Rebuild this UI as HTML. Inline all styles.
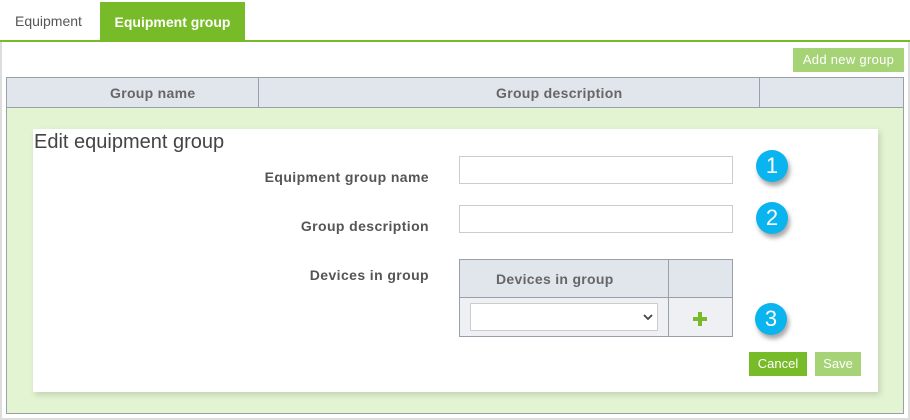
<!DOCTYPE html>
<html><head><style>
*{box-sizing:border-box;margin:0;padding:0}
body{width:910px;height:420px;background:#fff;font-family:"Liberation Sans",sans-serif;position:relative;overflow:hidden;color:#555}
.a{position:absolute}
.lbl{position:absolute;right:481px;font-weight:bold;font-size:14px;letter-spacing:0.4px;color:#555;white-space:nowrap}
.inp{position:absolute;border:1px solid #ccc;background:#fff}
.num{position:absolute;width:32px;height:32px;border-radius:50%;background:#0ab4ee;color:#fff;font-size:22px;text-align:center;line-height:32px;box-shadow:2px 4px 5px rgba(0,0,0,.35)}
.hd{position:absolute;font-weight:bold;font-size:14px;letter-spacing:0.3px;color:#666;white-space:nowrap}
</style></head><body>
<div class="a" style="left:15px;top:13px;font-size:14px;color:#555">Equipment</div>
<div class="a" style="left:100px;top:2px;width:145px;height:40px;background:#78bb28;color:#fff;font-weight:bold;font-size:14px;text-align:center;line-height:40px">Equipment group</div>
<div class="a" style="left:0;top:40px;width:910px;height:2px;background:#78bb28"></div>
<div class="a" style="left:0;top:42px;width:910px;height:378px;border:2px solid #ddd;border-top:none"></div>
<div class="a" style="left:793px;top:48px;width:111px;height:24px;background:#a6d375;color:#fff;font-size:13px;letter-spacing:0.3px;text-align:center;line-height:24px">Add new group</div>
<div class="a" style="left:6px;top:77px;width:898px;height:337px;border:1px solid #9aa0a8;background:#e3f4d2"></div>
<div class="a" style="left:7px;top:78px;width:896px;height:30px;background:#e1e5ec;border-bottom:1px solid #9aa0a8"></div>
<div class="a" style="left:258px;top:78px;width:1px;height:29px;background:#9aa0a8"></div>
<div class="a" style="left:759px;top:78px;width:1px;height:29px;background:#9aa0a8"></div>
<div class="hd" style="left:110px;top:85px">Group name</div>
<div class="hd" style="left:496px;top:85px">Group description</div>
<div class="a" style="left:33px;top:129px;width:845px;height:263px;background:#fff;box-shadow:2px 3px 6px rgba(0,0,0,.15)"></div>
<div class="a" style="left:34px;top:131px;font-size:20px;color:#444">Edit equipment group</div>
<div class="lbl" style="top:169px">Equipment group name</div>
<div class="lbl" style="top:218px">Group description</div>
<div class="lbl" style="top:267px">Devices in group</div>
<div class="inp" style="left:459px;top:156px;width:274px;height:28px"></div>
<div class="inp" style="left:459px;top:205px;width:274px;height:28px"></div>
<div class="a" style="left:459px;top:259px;width:274px;height:78px;border:1px solid #9aa0a8;background:#eef0f4"></div>
<div class="a" style="left:460px;top:260px;width:272px;height:38px;background:#e1e5ec;border-bottom:1px solid #9aa0a8"></div>
<div class="a" style="left:668px;top:260px;width:1px;height:76px;background:#9aa0a8"></div>
<div class="hd" style="left:496px;top:271px">Devices in group</div>
<div class="inp" style="left:470px;top:303px;width:188px;height:28px;border-color:#ccc"></div>
<svg class="a" style="left:643px;top:313px" width="10" height="8" viewBox="0 0 10 8"><path d="M1 2 L5 6 L9 2" stroke="#444" stroke-width="1.8" fill="none"/></svg>
<div class="a" style="left:693px;top:312px;width:14px;height:14px"><div class="a" style="left:5px;top:0;width:4px;height:14px;background:#78bb28"></div><div class="a" style="left:0;top:5px;width:14px;height:4px;background:#78bb28"></div></div>
<div class="num" style="left:756px;top:150px">1</div>
<div class="num" style="left:756px;top:202px">2</div>
<div class="num" style="left:755px;top:303px">3</div>
<div class="a" style="left:749px;top:352px;width:58px;height:24px;background:#78bb28;color:#fff;font-size:13px;text-align:center;line-height:24px">Cancel</div>
<div class="a" style="left:815px;top:352px;width:46px;height:24px;background:#a6d375;color:#fff;font-size:13px;text-align:center;line-height:24px">Save</div>
</body></html>
